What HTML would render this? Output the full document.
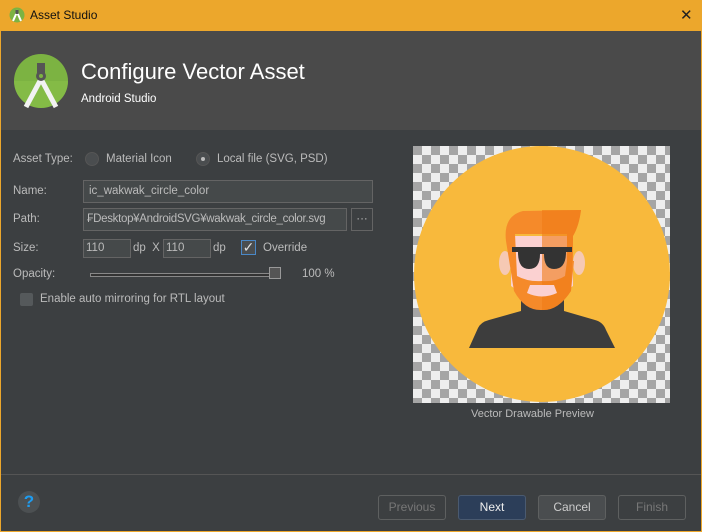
<!DOCTYPE html>
<html><head><style>
*{margin:0;padding:0;box-sizing:border-box}
body{width:702px;height:532px;background:#eca72c;font-family:"Liberation Sans",sans-serif;font-size:11.5px;color:#bbbbbb;position:relative;overflow:hidden}
.main{position:absolute;left:1px;top:31px;width:700px;height:500px;background:#3c3f41}
.hdr{position:absolute;left:0;top:0;width:700px;height:99px;background:#4a4a4a}
.abs{position:absolute}
.field{position:absolute;background:#45494a;border:1px solid #646464;color:#bbb;padding-left:5px;line-height:20px}
.btn{position:absolute;top:464px;height:25px;border:1px solid #5e6060;border-radius:3px;text-align:center;line-height:23px;font-size:12px}
</style></head><body>
<svg class="abs" style="left:9px;top:7px" width="16" height="16" viewBox="0 0 16 16"><circle cx="8" cy="8" r="7.5" fill="#7cb342"/><path d="M4 14 L8 5 L12 14" stroke="#fff" stroke-width="2" fill="none"/><rect x="6.5" y="3" width="3" height="4" fill="#555"/></svg>
<div class="abs" style="left:30px;top:8px;font-size:12px;color:#111">Asset Studio</div>
<div class="abs" style="left:680px;top:6px;font-size:15px;color:#222">✕</div>
<div class="main">
<div class="hdr">
<svg class="abs" style="left:13px;top:20px" width="56" height="62" viewBox="0 0 56 62"><circle cx="27" cy="30" r="27" fill="#7cb342"/><path d="M0 30 A27 27 0 0 0 54 30Z" fill="#8bc34a" opacity=".5"/><path d="M12 56 L27 28 L42 56" stroke="#f2f2f2" stroke-width="5" fill="none"/><rect x="23" y="12" width="8" height="10" fill="#555"/><circle cx="27" cy="25" r="5" fill="#555"/><circle cx="27" cy="25" r="2" fill="#7cb342"/></svg>
<div class="abs" style="left:80px;top:28px;font-size:22px;color:#fff">Configure Vector Asset</div>
<div class="abs" style="left:80px;top:62px;font-size:11.5px;color:#fff">Android Studio</div>
</div>
<div class="abs" style="left:12px;top:122px">Asset Type:</div>
<div class="abs" style="left:84px;top:121px;width:14px;height:14px;border-radius:50%;background:#4a4d4f;border:1px solid #555"></div>
<div class="abs" style="left:105px;top:122px">Material Icon</div>
<div class="abs" style="left:195px;top:121px;width:14px;height:14px;border-radius:50%;background:#4a4d4f;border:1px solid #555"><div style="width:4px;height:4px;background:#bbb;border-radius:50%;margin:4px"></div></div>
<div class="abs" style="left:216px;top:122px">Local file (SVG, PSD)</div>
<div class="abs" style="left:12px;top:154px">Name:</div>
<div class="field" style="left:82px;top:149px;width:290px;height:23px">ic_wakwak_circle_color</div>
<div class="abs" style="left:12px;top:182px">Path:</div>
<div class="field" style="left:82px;top:177px;width:264px;height:23px;overflow:hidden;white-space:nowrap;padding-left:3px;letter-spacing:-0.3px">₣Desktop¥AndroidSVG¥wakwak_circle_color.svg</div>
<div class="field" style="left:350px;top:177px;width:22px;height:23px;padding:0;text-align:center;background:#3c3f41">···</div>
<div class="abs" style="left:12px;top:211px">Size:</div>
<div class="field" style="left:82px;top:208px;width:48px;height:19px;line-height:17px;padding-left:2px">110</div>
<div class="abs" style="left:132px;top:211px">dp&nbsp; X</div>
<div class="field" style="left:162px;top:208px;width:48px;height:19px;line-height:17px;padding-left:2px">110</div>
<div class="abs" style="left:212px;top:211px">dp</div>
<div class="abs" style="left:240px;top:209px;width:15px;height:15px;background:#4a4d4f;border:1px solid #4a88c7;color:#ddd;font-size:14px;line-height:13px;text-align:center">✓</div>
<div class="abs" style="left:262px;top:211px">Override</div>
<div class="abs" style="left:12px;top:237px">Opacity:</div>
<div class="abs" style="left:89px;top:242px;width:186px;height:4px;border:1px solid #888;background:#333"></div>
<div class="abs" style="left:268px;top:236px;width:12px;height:12px;background:#555;border:1px solid #999"></div>
<div class="abs" style="left:301px;top:237px">100 %</div>
<div class="abs" style="left:19px;top:262px;width:13px;height:13px;background:#55595b;border-radius:2px"></div>
<div class="abs" style="left:39px;top:262px">Enable auto mirroring for RTL layout</div>
<svg class="abs" style="left:412px;top:115px" width="257" height="257" viewBox="0 0 257 257">
<defs><pattern id="c" width="18" height="18" patternUnits="userSpaceOnUse"><rect width="18" height="18" fill="#eeeeee"/><rect width="9" height="9" fill="#a5a5a5"/><rect x="9" y="9" width="9" height="9" fill="#a5a5a5"/></pattern></defs>
<rect width="257" height="257" fill="url(#c)"/>
<circle cx="129" cy="128" r="128" fill="#f8b93c"/>
<path d="M56 202 L65 182 Q68 176 76 174 L108 165 L108 145 L151 145 L151 165 L182 174 Q190 176 193 184 L202 202Z" fill="#3d3d3d"/>
<ellipse cx="92" cy="117" rx="6" ry="12" fill="#f6c9b4"/><ellipse cx="166" cy="117" rx="6" ry="12" fill="#f6c9b4"/>
<path d="M98 90 L160 90 L160 140 L129 162 L98 140Z" fill="#fbd1d1"/>
<path d="M93 95 Q90 70 110 65 L168 64 Q166 80 160 90 L160 120 L154 120 L154 88 L102 88 L104 130 Q115 136 129 135 Q143 136 152 130 L154 115 L161 115 L158 145 Q145 165 129 164 Q112 165 101 145Z" fill="#f58a2a"/>
<path d="M129 64 L168 64 Q166 80 160 90 L158 145 Q145 165 129 164Z" fill="#f07c18" opacity=".6"/>
<path d="M114 147 Q129 154 144 147 L141 139 L117 139Z" fill="#fbd1d1"/>
<path d="M99 101 L159 101 L159 106 L153 106 Q153 123 141 123 Q131 123 131 108 L127 108 Q127 123 116 123 Q105 123 105 106 L99 106Z" fill="#333"/>
</svg>
<div class="abs" style="left:470px;top:377px;font-size:11px">Vector Drawable Preview</div>
<div class="abs" style="left:0;top:443px;width:700px;height:1px;background:#555"></div>
<div class="abs" style="left:17px;top:460px;width:22px;height:22px;border-radius:50%;background:#4c5052;color:#1e9cf0;font-weight:bold;font-size:17px;text-align:center;line-height:22px">?</div>
<div class="btn" style="left:377px;width:68px;color:#777">Previous</div>
<div class="btn" style="left:457px;width:68px;background:#2c3e59;border-color:#4a5a70;color:#eee">Next</div>
<div class="btn" style="left:537px;width:68px;background:#4a4d4f;color:#ccc">Cancel</div>
<div class="btn" style="left:617px;width:68px;color:#777">Finish</div>
</div>
</body></html>
